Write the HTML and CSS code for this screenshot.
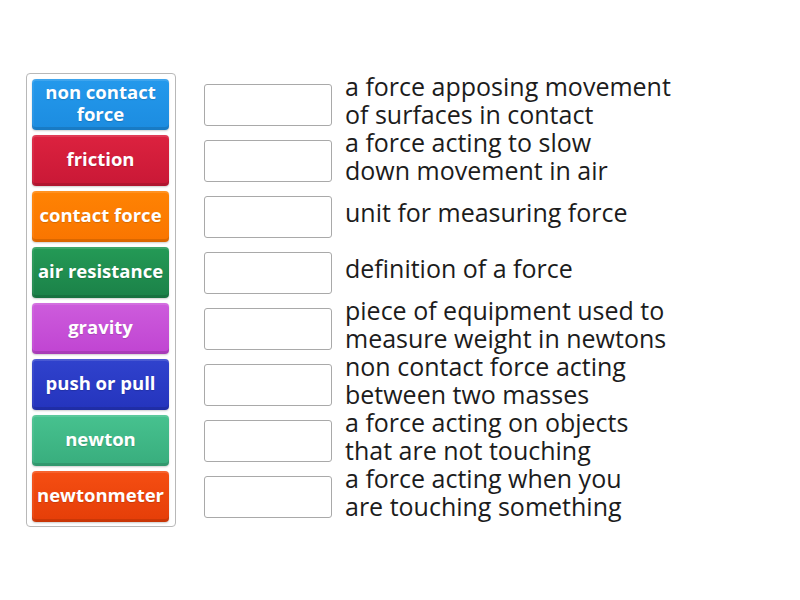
FILE: index.html
```html
<!DOCTYPE html>
<html>
  <head>
    <meta name="viewport" content="width=device-width, initial-scale=1" />
    <link rel="stylesheet" href="styles.css">
  </head>
  <body>
    <div class="game">
      <!-- Плитки с ответами -->
      <div class="tiles">
        <div class="tile blue">non contact<br />force</div>
        <div class="tile red">friction</div>
        <div class="tile orange">contact force</div>
        <div class="tile green">air resistance</div>
        <div class="tile purple">gravity</div>
        <div class="tile navy">push or pull</div>
        <div class="tile mint">newton</div>
        <div class="tile flame">newtonmeter</div>
      </div>

      <!-- Пустые ячейки и определения -->
      <div class="rows">
        <div class="row">
          <div class="slot"></div>
          <p>a force apposing movement<br />of surfaces in contact</p>
        </div>
        <div class="row">
          <div class="slot"></div>
          <p>a force acting to slow<br />down movement in air</p>
        </div>
        <div class="row">
          <div class="slot"></div>
          <p>unit for measuring force</p>
        </div>
        <div class="row">
          <div class="slot"></div>
          <p>definition of a force</p>
        </div>
        <div class="row">
          <div class="slot"></div>
          <p>piece of equipment used to<br />measure weight in newtons</p>
        </div>
        <div class="row">
          <div class="slot"></div>
          <p>non contact force acting<br />between two masses</p>
        </div>
        <div class="row">
          <div class="slot"></div>
          <p>a force acting on objects<br />that are not touching</p>
        </div>
        <div class="row">
          <div class="slot"></div>
          <p>a force acting when you<br />are touching something</p>
        </div>
      </div>
    </div>
  </body>
</html>
```

FILE: styles.css
```css
body {
  margin: 0;
  background: #fff;
  font-family: "Open Sans", "Liberation Sans", sans-serif;
}

.game {
  display: flex;
  align-items: flex-start;
  padding: 73px 0 0 26px;
}

/* Колонка с плитками */
.tiles {
  display: flex;
  flex-direction: column;
  gap: 5px;
  padding: 5px 6px 4px 5px;
  border: 1px solid #b8b8b8;
  border-radius: 4px;
}

.tile {
  box-sizing: border-box;
  width: 137px;
  height: 51px;
  display: flex;
  align-items: center;
  justify-content: center;
  text-align: center;
  padding: 0 1px 3px;
  border-radius: 4px;
  color: #fff;
  font-weight: 700;
  font-size: 18.5px;
  line-height: 22px;
  white-space: nowrap;
  text-shadow: 0 1px 1px rgba(0, 0, 0, 0.15);
  box-shadow: inset 0 -3px 0 rgba(0, 0, 0, 0.12),
    inset 0 2px 0 rgba(255, 255, 255, 0.12),
    inset 2px 0 0 rgba(255, 255, 255, 0.06),
    0 1px 2px rgba(0, 0, 0, 0.2);
}

.blue { background: linear-gradient(#2499ec, #1c8ce0); }
.red { background: linear-gradient(#dc223f, #c91836); }
.orange { background: linear-gradient(#ff8303, #f97500); }
.green { background: linear-gradient(#249a56, #1b8148); }
.purple { background: linear-gradient(#cd5cdc, #c044d2); }
.navy { background: linear-gradient(#3042cd, #2434bd); }
.mint { background: linear-gradient(#47c28f, #38ad7d); }
.flame { background: linear-gradient(#f54e12, #e53e08); }

/* Ячейки и определения */
.rows {
  display: flex;
  flex-direction: column;
  gap: 5px;
  padding-top: 6px;
  margin-left: 28px;
}

.row {
  height: 51px;
  display: flex;
  align-items: center;
}

.slot {
  box-sizing: border-box;
  width: 128px;
  height: 42px;
  border: 1px solid #a9a9a9;
  border-radius: 3px;
  background: #fff;
  flex-shrink: 0;
}

.row p {
  margin: 0 0 8px 13px;
  font-size: 25px;
  line-height: 27.8px;
  white-space: nowrap;
  color: #1c1c1c;
}
```
